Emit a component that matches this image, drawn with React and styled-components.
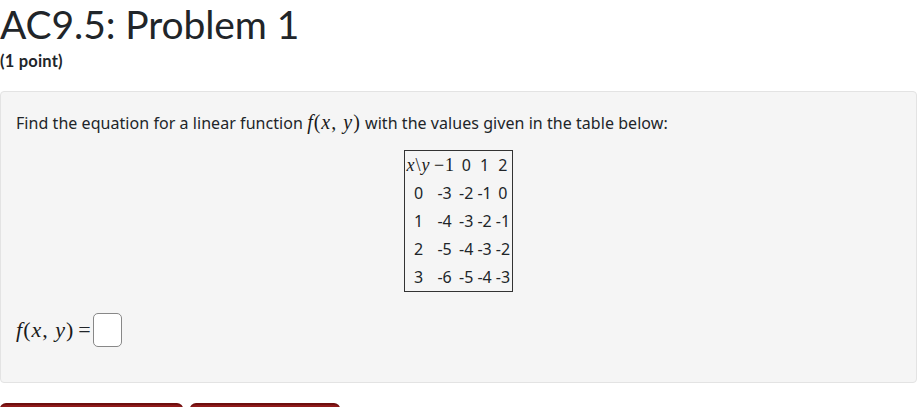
import styled, { createGlobalStyle } from 'styled-components';

const GlobalStyle = createGlobalStyle`
    body {
        margin: 0;
        background: #ffffff;
        color: #212529;
        font-family: "Noto Sans", "Open Sans", sans-serif;
    }
`;

const rows = [
    ['0', '-3', '-2', '-1', '0'],
    ['1', '-4', '-3', '-2', '-1'],
    ['2', '-5', '-4', '-3', '-2'],
    ['3', '-6', '-5', '-4', '-3'],
];

function FOfXY({ size }) {
    return (
        <MathGroup $size={size}>
            <MathI>f</MathI>
            <MathN>(</MathN>
            <MathI>x</MathI>
            <MathN>, </MathN>
            <MathI>y</MathI>
            <MathN>)</MathN>
        </MathGroup>
    );
}

export default function App() {
    return (
        <Page>
            <GlobalStyle />
            <Title>AC9.5: Problem 1</Title>
            <Points>(1 point)</Points>
            <ProblemPanel>
                <Statement>
                    Find the equation for a linear function <FOfXY size={20} /> with the values given in the table below:
                </Statement>
                <TableWrap>
                    <ValueTable>
                        <tbody>
                            <tr>
                                <Cell>
                                    <MathGroup $size={18}>
                                        <MathI>x</MathI>
                                        <MathN>\</MathN>
                                        <MathI>y</MathI>
                                    </MathGroup>
                                </Cell>
                                <Cell>
                                    <MathGroup $size={18}>
                                        <MathN>−1</MathN>
                                    </MathGroup>
                                </Cell>
                                <Cell>0</Cell>
                                <Cell>1</Cell>
                                <Cell>2</Cell>
                            </tr>
                            {rows.map((r) => (
                                <tr key={r[0]}>
                                    {r.map((v, i) => (
                                        <Cell key={i}>{v}</Cell>
                                    ))}
                                </tr>
                            ))}
                        </tbody>
                    </ValueTable>
                </TableWrap>
                <AnswerRow>
                    <FOfXY size={22} />
                    <Equals>=</Equals>
                    <AnswerInput type="text" />
                </AnswerRow>
            </ProblemPanel>
            <ButtonRow>
                <SubmitButton $width={183} />
                <SubmitButton $width={150} />
            </ButtonRow>
        </Page>
    );
}

// styled-components
const Page = styled.div`
    width: 921px;
    height: 407px;
    overflow: hidden;
    box-sizing: border-box;
`;

const Title = styled.h1`
    margin: 0;
    font-family: Lato, "Noto Sans", sans-serif;
    font-size: 39px;
    font-weight: 400;
    line-height: 49px;
    letter-spacing: -0.1px;
`;

const Points = styled.div`
    margin-top: 1px;
    font-family: Lato, "Noto Sans", sans-serif;
    font-size: 16.5px;
    font-weight: 700;
    line-height: 22px;
    letter-spacing: 0.2px;
`;

const ProblemPanel = styled.div`
    margin-top: 19px;
    width: 917px;
    height: 292px;
    box-sizing: border-box;
    padding: 18px 15px 0;
    background: #f5f5f5;
    border: 1px solid #e3e3e3;
    border-radius: 4px;
`;

const Statement = styled.p`
    margin: 0;
    font-size: 16px;
    line-height: 24px;
    letter-spacing: 0.05px;
`;

const MathGroup = styled.span`
    font-family: "Liberation Serif", "DejaVu Serif", serif;
    font-size: ${({ $size }) => $size}px;
    letter-spacing: 1px;
    white-space: pre;
    color: #1a1a1a;
`;

const MathI = styled.span`
    font-style: italic;
`;

const MathN = styled.span`
    font-style: normal;
`;

const TableWrap = styled.div`
    display: flex;
    justify-content: center;
    margin-top: 15px;
`;

const ValueTable = styled.table`
    border: 1px solid #333;
    border-collapse: collapse;
    background: #f5f5f5;
`;

const Cell = styled.td`
    height: 28px;
    padding: 0 2px;
    text-align: center;
    font-size: 16px;
    line-height: 28px;
    white-space: nowrap;
    &:first-child {
        padding: 0 1px;
        min-width: 25px;
    }
`;

const AnswerRow = styled.div`
    display: flex;
    align-items: center;
    margin-top: 21px;
    height: 34px;
`;

const Equals = styled.span`
    font-family: "Liberation Serif", "DejaVu Serif", serif;
    font-size: 22px;
    margin: 0 2px 0 4px;
`;

const AnswerInput = styled.input`
    width: 29px;
    height: 34px;
    box-sizing: border-box;
    border: 1px solid #888;
    border-radius: 5px;
    background: #fff;
    padding: 0;
`;

const ButtonRow = styled.div`
    display: flex;
    gap: 7px;
    margin-top: 20px;
`;

const SubmitButton = styled.div`
    width: ${({ $width }) => $width}px;
    height: 30px;
    background: #8f1a1a;
    border-top: 2px solid #6e0f0f;
    border-radius: 6px 6px 0 0;
`;
